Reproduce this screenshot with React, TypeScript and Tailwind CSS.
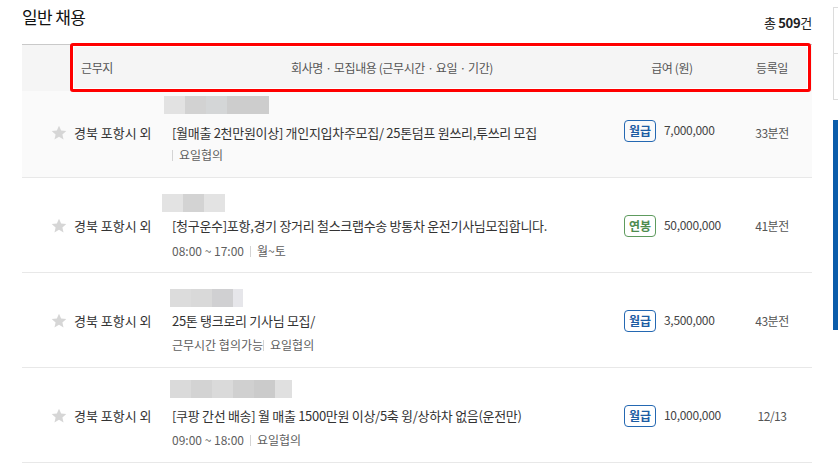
import React from "react";

type Block = [number, string];

type Job = {
  blocks: Block[];
  blockMl: string;
  pad: string;
  titleMt: string;
  subMt: string;
  colPt: string;
  badgePt: string;
  rowH: string;
  bg: string;
  title: string;
  sub: React.ReactNode;
  pay: "월급" | "연봉";
  amount: string;
  date: string;
};

const Sep = ({ tight }: { tight?: boolean }) => (
  <span className={tight ? "inline-block w-px h-[11px] bg-[#d4d4d4] mr-[6px] align-[-1px]" : "inline-block w-px h-[11px] bg-[#d4d4d4] mx-[6px] align-[-1px]"} />
);

const jobs: Job[] = [
  {
    blocks: [[21, "#e2e2e2"], [21, "#d2d2d2"], [21, "#d4d6d7"], [42, "#cdcdcd"]],
    blockMl: "-ml-[8px]",
    pad: "pt-[5px]",
    titleMt: "mt-[9px]",
    subMt: "mt-[2px]",
    colPt: "pt-[32px]",
    badgePt: "pt-[29px]",
    rowH: "h-[87px]",
    bg: "bg-[#fafafa]",
    title: "[월매출 2천만원이상] 개인지입차주모집/ 25톤덤프 원쓰리,투쓰리 모집",
    sub: (
      <>
        <Sep tight />
        요일협의
      </>
    ),
    pay: "월급",
    amount: "7,000,000",
    date: "33분전",
  },
  {
    blocks: [[21, "#e3e3e3"], [21, "#d3d3d3"], [21, "#e3e3e3"]],
    blockMl: "-ml-[10px]",
    pad: "pt-[16px]",
    titleMt: "mt-[4px]",
    subMt: "mt-[5px]",
    colPt: "pt-[38px]",
    badgePt: "pt-[37px]",
    rowH: "h-[95px]",
    bg: "bg-white",
    title: "[청구운수]포항,경기 장거리 철스크랩수송 방통차 운전기사님모집합니다.",
    sub: (
      <>
        08:00 ~ 17:00
        <Sep />
        월~토
      </>
    ),
    pay: "연봉",
    amount: "50,000,000",
    date: "41분전",
  },
  {
    blocks: [[21, "#dcdcdc"], [21, "#d9d9d9"], [21, "#d0d0d2"], [10, "#e6e6ea"]],
    blockMl: "-ml-[2px]",
    pad: "pt-[16px]",
    titleMt: "mt-[4px]",
    subMt: "mt-[4px]",
    colPt: "pt-[38px]",
    badgePt: "pt-[37px]",
    rowH: "h-[95px]",
    bg: "bg-white",
    title: "25톤 탱크로리 기사님 모집/",
    sub: (
      <>
        근무시간 협의가능
        <Sep tight />
        요일협의
      </>
    ),
    pay: "월급",
    amount: "3,500,000",
    date: "43분전",
  },
  {
    blocks: [[21, "#dadada"], [21, "#d3d3d3"], [21, "#dadada"], [21, "#d0d0d0"], [21, "#cbcbcb"], [17, "#e0e0e0"]],
    blockMl: "-ml-[2px]",
    pad: "pt-[12px]",
    titleMt: "mt-[8px]",
    subMt: "mt-[4px]",
    colPt: "pt-[38px]",
    badgePt: "pt-[37px]",
    rowH: "h-[95px]",
    bg: "bg-white",
    title: "[쿠팡 간선 배송] 월 매출 1500만원 이상/5축 윙/상하차 없음(운전만)",
    sub: (
      <>
        09:00 ~ 18:00
        <Sep />
        요일협의
      </>
    ),
    pay: "월급",
    amount: "10,000,000",
    date: "12/13",
  },
];

function StarIcon() {
  return (
    <svg width="16" height="16" viewBox="0 0 24 24" className="shrink-0">
      <polygon
        points="12,1 15.2,8.1 23,8.9 17.1,14.1 18.8,21.8 12,17.8 5.2,21.8 6.9,14.1 1,8.9 8.8,8.1"
        fill="#d6d6d6"
      />
    </svg>
  );
}

function PayBadge({ type }: { type: "월급" | "연봉" }) {
  return (
    <span
      className={
        type === "월급"
          ? "flex h-[22px] w-[32px] items-center justify-center rounded-[4px] border border-[#2468b2] text-[12px] font-bold text-[#1d5ca3]"
          : "flex h-[22px] w-[32px] items-center justify-center rounded-[4px] border border-[#5e9b5e] text-[12px] font-bold text-[#4f8c4f]"
      }
    >
      {type}
    </span>
  );
}

export default function App() {
  return (
    <div
      className="flex h-[471px] w-[838px] overflow-hidden bg-white text-[#333]"
      style={{ fontFamily: '"Noto Sans CJK KR", "Noto Sans", sans-serif' }}
    >
      <div className="ml-[22px] w-[790px] shrink-0">
        {/* Title */}
        <div className="flex h-[44px] items-start justify-between">
          <h2 className="pt-[5px] text-[17px] leading-[24px] tracking-[-0.6px] text-[#111]">일반 채용</h2>
          <p className="pt-[13px] text-[13px] leading-[20px] tracking-[-0.3px] text-[#222]">
            총 <b className="font-bold">509</b>건
          </p>
        </div>

        {/* Header */}
        <div className="relative flex h-[47px] items-center border-t border-[#c9c9c9] bg-[#f5f5f5] text-[12px] tracking-[-0.4px] text-[#555]">
          <div className="w-[150px] text-center">근무지</div>
          <div className="flex-1 text-center">회사명 · 모집내용 (근무시간 · 요일 · 기간)</div>
          <div className="w-[120px] text-center">급여 (원)</div>
          <div className="w-[80px] text-center">등록일</div>
          <div className="absolute left-[48px] top-[-2px] h-[49px] w-[741px] rounded-[3px] border-[3px] border-[#ff0000] shadow-[inset_0_0_0_1px_#fff]" />
        </div>

        {/* Rows */}
        {jobs.map((job, i) => (
          <div key={i} className={`flex border-b border-[#e8e8e8] ${job.rowH} ${job.bg}`}>
            <div className={`flex w-[150px] items-center gap-[7px] self-start pl-[29px] ${job.colPt}`}>
              <StarIcon />
              <span className="text-[13px] leading-[20px] text-[#333]">경북 포항시 외</span>
            </div>
            <div className={`flex-1 ${job.pad}`}>
              <div className={`flex h-[18px] ${job.blockMl}`}>
                {job.blocks.map(([w, c], j) => (
                  <span key={j} className="h-full" style={{ width: w, backgroundColor: c }} />
                ))}
              </div>
              <p className={`text-[13px] leading-[20px] tracking-[-0.3px] text-[#333] ${job.titleMt}`}>{job.title}</p>
              <p className={`text-[12px] leading-[20px] text-[#5e5e5e] ${job.subMt}`}>{job.sub}</p>
            </div>
            <div className={`flex w-[120px] items-center gap-[8px] self-start pl-[12px] ${job.badgePt}`}>
              <PayBadge type={job.pay} />
              <span className="-mt-[3px] text-[12px] leading-[20px] tracking-[-0.3px] text-[#444]">{job.amount}</span>
            </div>
            <div className={`w-[80px] self-start text-center text-[12px] leading-[20px] tracking-[-0.5px] text-[#555] ${job.colPt}`}>
              {job.date}
            </div>
          </div>
        ))}
      </div>

      {/* Right side panel */}
      <div className="ml-[21px] w-[120px] shrink-0">
        <div className="mt-[7px] h-[93px] border border-[#dcdcdc]">
          <div className="h-[46px] border-b border-[#dcdcdc]" />
        </div>
        <div className="mt-[20px] h-[210px] bg-[#0b5dab]" />
      </div>
    </div>
  );
}
